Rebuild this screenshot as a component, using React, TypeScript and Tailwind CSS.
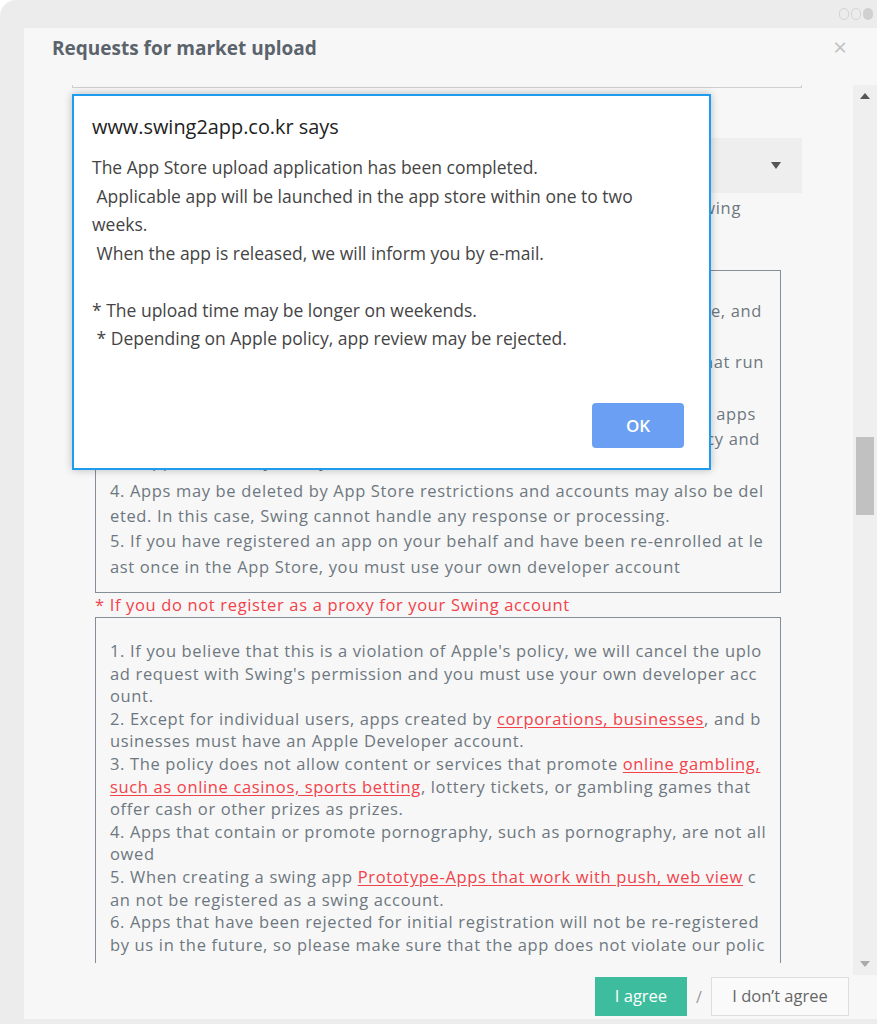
import React from "react";

const F = { fontFamily: '"Open Sans", "Noto Sans", sans-serif' };

function Link({ children }: { children: React.ReactNode }) {
  return <span className="text-[#f2424a] underline underline-offset-2">{children}</span>;
}

function ScrollBar() {
  return (
    <div className="w-[24px] h-[890px] bg-[#efefef] flex flex-col items-center relative">
      <div className="h-[22px] w-full flex items-center justify-center">
        <div className="w-0 h-0 border-l-[5px] border-r-[5px] border-b-[6px] border-l-transparent border-r-transparent border-b-[#555]" />
      </div>
      <div className="mt-[330px] w-[18px] h-[78px] bg-[#c1c1c1]" />
      <div className="flex-1" />
      <div className="h-[22px] w-full flex items-center justify-center">
        <div className="w-0 h-0 border-l-[5px] border-r-[5px] border-t-[6px] border-l-transparent border-r-transparent border-t-[#aaa]" />
      </div>
    </div>
  );
}

export default function App() {
  const box1Tail = [
    { t: "Swing's developer account is used for the app name, and", pr: "pr-[18px]" },
    { t: "", pr: "" },
    { t: "registered with the account are limited to apps that run", pr: "pr-[16px]" },
    { t: "", pr: "" },
    { t: "Apple reviews every app in the App Store and all apps", pr: "pr-[24px]" },
    { t: "that violate the policy are rejected by Apple's policy and", pr: "pr-[20px]" },
  ];
  return (
    <div className="w-[877px] h-[1024px] bg-white overflow-hidden relative" style={F}>
      <div className="h-full bg-[#ececec] rounded-tl-[16px] flex flex-col">
        <div className="h-[28px] flex justify-end items-center pr-[4px] gap-[2px]">
          <div className="w-[10px] h-[12px] rounded-full border border-[#d4d4d4] bg-[#ececec]" />
          <div className="w-[10px] h-[12px] rounded-full border border-[#d4d4d4] bg-[#ececec]" />
          <div className="w-[10px] h-[12px] rounded-full bg-[#d0d0d0]" />
        </div>
        <div className="ml-[24px] h-[991px] bg-[#f7f7f7] flex flex-col">
          <div className="h-[57px] flex items-start justify-between pl-[28px] pr-[30px]">
            <div className="mt-[6px] text-[19px] font-bold text-[#5b636c]">
              Requests for market upload
            </div>
            <div className="mt-[7px] text-[24px] text-[#c2c2c2] leading-none">×</div>
          </div>
          <div className="flex">
            <div className="w-[829px] h-[878px] overflow-hidden pl-[48px] pr-[51px] text-[16.5px] tracking-[0.65px] text-[#6e7780]">
              <div className="h-[3px] border-x border-b border-[#cfcfcf]" />
              <div className="mt-[50px] h-[55px] bg-[#eeeeee] flex items-center justify-end pr-[21px]">
                <div className="w-0 h-0 border-l-[5px] border-r-[5px] border-t-[7px] border-l-transparent border-r-transparent border-t-[#555]" />
              </div>
              <div className="h-[30px] flex items-center justify-end pr-[61px] whitespace-nowrap">
                Please read the following
              </div>
              <div className="mt-[47px] ml-[23px] mr-[21px] border border-[#858e97] pt-[27px] pb-[13px] leading-[25.3px]">
                {box1Tail.map((l, i) => (
                  <div key={i} className={`h-[25.7px] leading-[25.7px] whitespace-nowrap text-right ${l.pr}`}>{l.t}</div>
                ))}
                <div className="h-[25.7px] leading-[17.7px] whitespace-nowrap pl-[14px]">the app review may be rejected.</div>
                <div className="pl-[14px] whitespace-nowrap">4. Apps may be deleted by App Store restrictions and accounts may also be del</div>
                <div className="pl-[14px] whitespace-nowrap">eted. In this case, Swing cannot handle any response or processing.</div>
                <div className="pl-[14px] whitespace-nowrap">5. If you have registered an app on your behalf and have been re-enrolled at le</div>
                <div className="pl-[14px] whitespace-nowrap">ast once in the App Store, you must use your own developer account</div>
              </div>
              <div className="ml-[23px] h-[24px] flex items-center text-[#f2424a] whitespace-nowrap">
                * If you do not register as a proxy for your Swing account
              </div>
              <div className="ml-[23px] mr-[21px] border-x border-t border-[#858e97] pt-[22px] pl-[14px] leading-[22.6px] whitespace-nowrap">
                <div>1. If you believe that this is a violation of Apple's policy, we will cancel the uplo</div>
                <div>ad request with Swing's permission and you must use your own developer acc</div>
                <div>ount.</div>
                <div>2. Except for individual users, apps created by <Link>corporations, businesses</Link>, and b</div>
                <div>usinesses must have an Apple Developer account.</div>
                <div>3. The policy does not allow content or services that promote <Link>online gambling,</Link></div>
                <div><Link>such as online casinos, sports betting</Link>, lottery tickets, or gambling games that</div>
                <div>offer cash or other prizes as prizes.</div>
                <div>4. Apps that contain or promote pornography, such as pornography, are not all</div>
                <div>owed</div>
                <div>5. When creating a swing app <Link>Prototype-Apps that work with push, web view</Link> c</div>
                <div>an not be registered as a swing account.</div>
                <div>6. Apps that have been rejected for initial registration will not be re-registered</div>
                <div>by us in the future, so please make sure that the app does not violate our polic</div>
                <div>y.</div>
              </div>
            </div>
            <ScrollBar />
          </div>
          <div className="mt-[2px] flex justify-end items-center pr-[28px] gap-0">
            <div className="w-[92px] h-[39px] bg-[#3dbd9d] text-white text-[16.5px] flex items-center justify-center">I agree</div>
            <div className="w-[24px] text-center text-[#999] text-[16px]">/</div>
            <div className="w-[138px] h-[39px] border border-[#dedede] bg-[#fafafa] text-[#666] text-[16.5px] flex items-center justify-center">I don’t agree</div>
          </div>
        </div>
      </div>

      <div className="absolute left-[72px] top-[94px] w-[639px] h-[376px] bg-white border-2 border-[#1e9cef] shadow-[0_0_8px_rgba(0,0,0,0.25)] flex flex-col">
        <div className="pl-[18px] pt-[17px] text-[19.9px] text-[#222] leading-[28px] whitespace-nowrap">www.swing2app.co.kr says</div>
        <div className="pl-[18px] mt-[12px] text-[17.5px] text-[#444] leading-[28.5px] whitespace-pre">
          <div>The App Store upload application has been completed.</div>
          <div> Applicable app will be launched in the app store within one to two</div>
          <div>weeks.</div>
          <div> When the app is released, we will inform you by e-mail.</div>
          <div>&nbsp;</div>
          <div>* The upload time may be longer on weekends.</div>
          <div> * Depending on Apple policy, app review may be rejected.</div>
        </div>
        <div className="flex-1" />
        <div className="flex justify-end pr-[25px] pb-[20px]">
          <div className="w-[92px] h-[45px] rounded-[4px] bg-[#6a9ff4] text-white text-[17px] font-semibold flex items-center justify-center">OK</div>
        </div>
      </div>
    </div>
  );
}
